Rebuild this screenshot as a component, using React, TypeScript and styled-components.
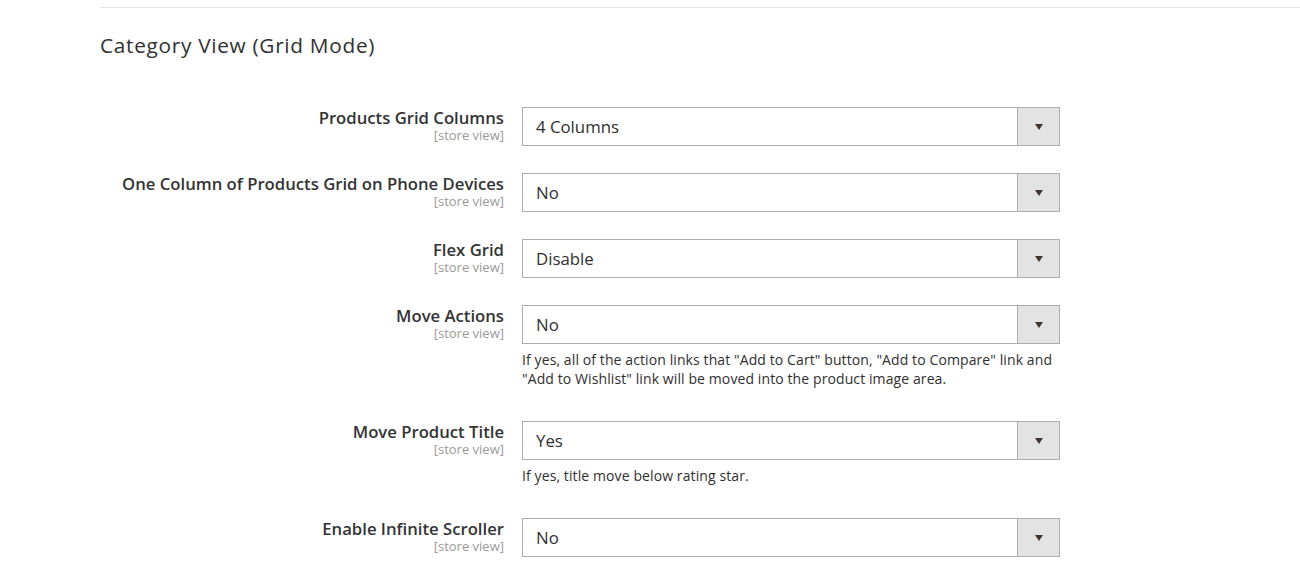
import React from "react";
import styled, { createGlobalStyle } from "styled-components";

const GlobalStyle = createGlobalStyle`
    body {
        margin: 0;
        background: #fff;
        font-family: "Open Sans", "Liberation Sans", sans-serif;
        color: #303030;
    }
`;

const fields = [
    { label: "Products Grid Columns", value: "4 Columns" },
    { label: "One Column of Products Grid on Phone Devices", value: "No" },
    { label: "Flex Grid", value: "Disable" },
    {
        label: "Move Actions",
        value: "No",
        note: 'If yes, all of the action links that "Add to Cart" button, "Add to Compare" link and "Add to Wishlist" link will be moved into the product image area.',
    },
    {
        label: "Move Product Title",
        value: "Yes",
        note: "If yes, title move below rating star.",
    },
    { label: "Enable Infinite Scroller", value: "No" },
];

const Page = styled.div`
    padding-top: 7px;
    padding-left: 100px;
`;

const Section = styled.section`
    border-top: 1px solid #e3e3e3;
`;

const Title = styled.h2`
    margin: 23px 0 48px;
    font-size: 20.8px;
    line-height: 28px;
    font-weight: 400;
    color: #303030;
    letter-spacing: 0.7px;
`;

const Row = styled.div`
    display: grid;
    grid-template-columns: 404px 538px;
    column-gap: 18px;
    padding-bottom: 27px;
`;

const LabelCell = styled.div`
    text-align: right;
`;

const Label = styled.div`
    font-size: 16.7px;
    line-height: 21px;
    font-weight: 600;
    color: #333;
`;

const Scope = styled.div`
    font-size: 13px;
    line-height: 15px;
    color: #999;
`;

const Select = styled.div`
    height: 39px;
    box-sizing: border-box;
    border: 1px solid #adadad;
    display: flex;
    align-items: center;
    padding-left: 13px;
    font-size: 16.8px;
    color: #303030;
`;

const SelectText = styled.span`
    flex: 1;
`;

const ArrowBox = styled.span`
    width: 41px;
    align-self: stretch;
    background: #e3e3e3;
    border-left: 1px solid #adadad;
    display: flex;
    align-items: center;
    justify-content: center;
`;

const Arrow = styled.span`
    width: 0;
    height: 0;
    border-left: 4.5px solid transparent;
    border-right: 4.5px solid transparent;
    border-top: 6px solid #41362f;
`;

const Note = styled.div`
    margin: 6px 0;
    font-size: 14px;
    line-height: 19px;
    letter-spacing: 0.1px;
    color: #303030;
`;

function App() {
    return (
        <Page>
            <GlobalStyle />
            <Section>
                <Title>Category View (Grid Mode)</Title>
                {fields.map((f, i) => (
                    <Row key={i}>
                        <LabelCell>
                            <Label>{f.label}</Label>
                            <Scope>[store view]</Scope>
                        </LabelCell>
                        <div>
                            <Select>
                                <SelectText>{f.value}</SelectText>
                                <ArrowBox>
                                    <Arrow />
                                </ArrowBox>
                            </Select>
                            {f.note && <Note>{f.note}</Note>}
                        </div>
                    </Row>
                ))}
            </Section>
        </Page>
    );
}

export default App;
